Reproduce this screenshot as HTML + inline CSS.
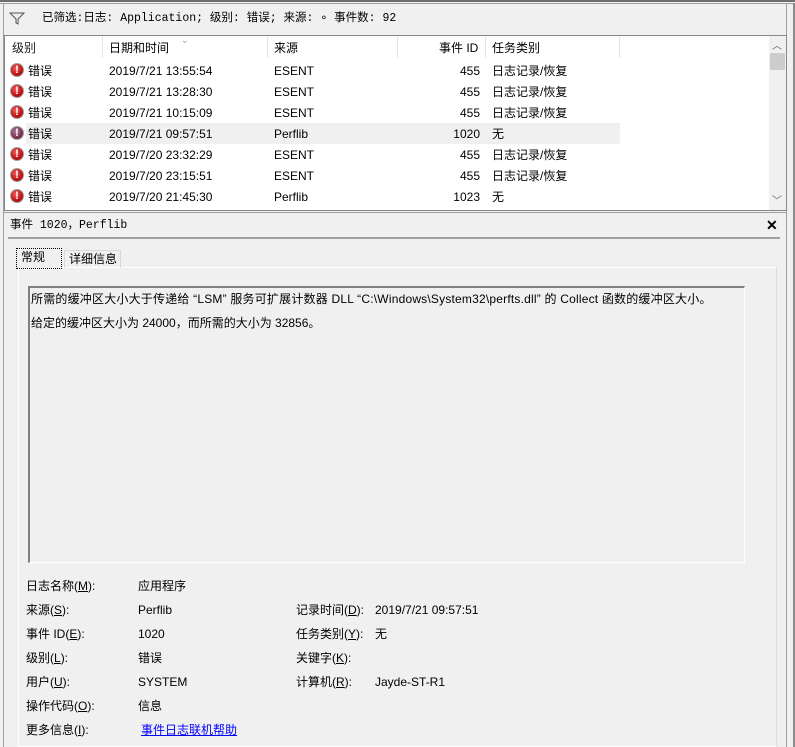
<!DOCTYPE html>
<html><head><meta charset="utf-8"><style>
*{margin:0;padding:0;box-sizing:border-box}
body{width:795px;height:747px;background:#f0f0f0;position:relative;overflow:hidden;font-family:"Liberation Sans","Noto Sans CJK SC",sans-serif;font-size:12px;color:#000;line-height:16px}
.a{position:absolute;white-space:nowrap}
.mono{font-family:"Liberation Mono","Noto Sans CJK SC",monospace;font-size:11px}
.ic{position:absolute;width:14px;height:14px;border-radius:50%;background:radial-gradient(circle at 40% 35%,#f06060,#c01010 60%,#901010);border:1px solid #a0a0a0}
.ic:after{content:"!";position:absolute;left:0;top:-1px;width:12px;text-align:center;color:#fff;font-weight:bold;font-size:11px;line-height:14px}
u{text-decoration:underline}
</style></head><body>
<div class="a" style="left:0;top:0;width:795px;height:2px;background:#6d6d6d"></div>
<div class="a" style="left:0;top:3px;width:795px;height:1px;background:#a0a0a0"></div>
<div class="a" style="left:3px;top:3px;width:1px;height:744px;background:#a0a0a0"></div>
<div class="a" style="left:786px;top:3px;width:1px;height:744px;background:#a0a0a0"></div>
<div class="a" style="left:793px;top:3px;width:2px;height:744px;background:#8a8a8a"></div>
<svg class="a" style="left:9px;top:12px" width="16" height="13" viewBox="0 0 16 13"><path d="M1 1H15L9 7V12L7 11V7Z" fill="none" stroke="#555" stroke-width="1"/></svg>
<div class="a mono" style="left:42px;top:11px;font-size:11.5px">已筛选:日志: Application; 级别: 错误; 来源: ∘ 事件数: 92</div>
<div class="a" style="left:4px;top:35px;width:783px;height:176px;background:#fff;border:1px solid #828790"></div>
<div class="a" style="left:769px;top:36px;width:17px;height:174px;background:#f0f0f0"></div>
<div class="a" style="left:770px;top:53px;width:15px;height:17px;background:#cdcdcd"></div>
<div class="a" style="left:772px;top:39px;color:#606060;font-size:10px">︿</div>
<div class="a" style="left:772px;top:194px;color:#606060;font-size:10px">﹀</div>
<div class="a" style="left:102px;top:36px;width:1px;height:22px;background:#e5e5e5"></div>
<div class="a" style="left:267px;top:36px;width:1px;height:22px;background:#e5e5e5"></div>
<div class="a" style="left:397px;top:36px;width:1px;height:22px;background:#e5e5e5"></div>
<div class="a" style="left:485px;top:36px;width:1px;height:22px;background:#e5e5e5"></div>
<div class="a" style="left:619px;top:36px;width:1px;height:22px;background:#e5e5e5"></div>
<div class="a" style="left:181px;top:32px;color:#999;font-size:9px">⌄</div>
<div class="a" style="left:12px;top:40px;color:#1e1e1e">级别</div>
<div class="a" style="left:109px;top:40px">日期和时间</div>
<div class="a" style="left:274px;top:40px">来源</div>
<div class="a" style="left:439px;top:40px">事件 ID</div>
<div class="a" style="left:492px;top:40px">任务类别</div>
<div class="a" style="left:26px;top:123px;width:594px;height:21px;background:#f0f0f0"></div>
<div class="ic" style="left:10px;top:63px"></div><div class="a" style="left:28px;top:63px">错误</div><div class="a" style="left:109px;top:63px">2019/7/21 13:55:54</div><div class="a" style="left:274px;top:63px">ESENT</div><div class="a" style="left:400px;top:63px;width:80px;text-align:right">455</div><div class="a" style="left:492px;top:63px">日志记录/恢复</div>
<div class="ic" style="left:10px;top:84px"></div><div class="a" style="left:28px;top:84px">错误</div><div class="a" style="left:109px;top:84px">2019/7/21 13:28:30</div><div class="a" style="left:274px;top:84px">ESENT</div><div class="a" style="left:400px;top:84px;width:80px;text-align:right">455</div><div class="a" style="left:492px;top:84px">日志记录/恢复</div>
<div class="ic" style="left:10px;top:105px"></div><div class="a" style="left:28px;top:105px">错误</div><div class="a" style="left:109px;top:105px">2019/7/21 10:15:09</div><div class="a" style="left:274px;top:105px">ESENT</div><div class="a" style="left:400px;top:105px;width:80px;text-align:right">455</div><div class="a" style="left:492px;top:105px">日志记录/恢复</div>
<div class="ic" style="left:10px;top:126px;background:radial-gradient(circle at 40% 35%,#a080a0,#803050 60%,#602040)"></div><div class="a" style="left:28px;top:126px">错误</div><div class="a" style="left:109px;top:126px">2019/7/21 09:57:51</div><div class="a" style="left:274px;top:126px">Perflib</div><div class="a" style="left:400px;top:126px;width:80px;text-align:right">1020</div><div class="a" style="left:492px;top:126px">无</div>
<div class="ic" style="left:10px;top:147px"></div><div class="a" style="left:28px;top:147px">错误</div><div class="a" style="left:109px;top:147px">2019/7/20 23:32:29</div><div class="a" style="left:274px;top:147px">ESENT</div><div class="a" style="left:400px;top:147px;width:80px;text-align:right">455</div><div class="a" style="left:492px;top:147px">日志记录/恢复</div>
<div class="ic" style="left:10px;top:168px"></div><div class="a" style="left:28px;top:168px">错误</div><div class="a" style="left:109px;top:168px">2019/7/20 23:15:51</div><div class="a" style="left:274px;top:168px">ESENT</div><div class="a" style="left:400px;top:168px;width:80px;text-align:right">455</div><div class="a" style="left:492px;top:168px">日志记录/恢复</div>
<div class="ic" style="left:10px;top:189px"></div><div class="a" style="left:28px;top:189px">错误</div><div class="a" style="left:109px;top:189px">2019/7/20 21:45:30</div><div class="a" style="left:274px;top:189px">Perflib</div><div class="a" style="left:400px;top:189px;width:80px;text-align:right">1023</div><div class="a" style="left:492px;top:189px">无</div>
<div class="a" style="left:4px;top:212px;width:783px;height:1px;background:#a0a0a0"></div>
<div class="a mono" style="left:10px;top:218px;font-size:11.5px">事件 1020，Perflib</div>
<div class="a" style="left:766px;top:217px;font-weight:bold;font-size:14px">✕</div>
<div class="a" style="left:8px;top:237px;width:772px;height:2px;background:#a0a0a0"></div>
<div class="a" style="left:18px;top:267px;width:759px;height:480px;background:#f0f0f0;border:1px solid #fff;border-right-color:#dcdcdc"></div>
<div class="a" style="left:16px;top:248px;width:46px;height:21px;border:1px dotted #000;background:#f0f0f0"></div>
<div class="a" style="left:21px;top:249px">常规</div>
<div class="a" style="left:64px;top:250px;width:57px;height:18px;border:1px solid #d9d9d9;border-bottom:none"></div>
<div class="a" style="left:69px;top:251px">详细信息</div>
<div class="a" style="left:28px;top:286px;width:717px;height:277px;border:1px solid #fff;border-left:2px solid #808080;border-top:2px solid #808080;background:#f0f0f0"></div>
<div class="a" style="left:31px;top:291px;letter-spacing:0.2px">所需的缓冲区大小大于传递给 “LSM” 服务可扩展计数器 DLL “C:\Windows\System32\perfts.dll” 的 Collect 函数的缓冲区大小。</div>
<div class="a" style="left:31px;top:315px">给定的缓冲区大小为 24000，而所需的大小为 32856。</div>
<div class="a" style="left:26px;top:578px">日志名称(<u>M</u>):</div><div class="a" style="left:138px;top:578px">应用程序</div>
<div class="a" style="left:26px;top:602px">来源(<u>S</u>):</div><div class="a" style="left:138px;top:602px">Perflib</div>
<div class="a" style="left:296px;top:602px">记录时间(<u>D</u>):</div><div class="a" style="left:375px;top:602px">2019/7/21 09:57:51</div>
<div class="a" style="left:26px;top:626px">事件 ID(<u>E</u>):</div><div class="a" style="left:138px;top:626px">1020</div>
<div class="a" style="left:296px;top:626px">任务类别(<u>Y</u>):</div><div class="a" style="left:375px;top:626px">无</div>
<div class="a" style="left:26px;top:650px">级别(<u>L</u>):</div><div class="a" style="left:138px;top:650px">错误</div>
<div class="a" style="left:296px;top:650px">关键字(<u>K</u>):</div>
<div class="a" style="left:26px;top:674px">用户(<u>U</u>):</div><div class="a" style="left:138px;top:674px">SYSTEM</div>
<div class="a" style="left:296px;top:674px">计算机(<u>R</u>):</div><div class="a" style="left:375px;top:674px">Jayde-ST-R1</div>
<div class="a" style="left:26px;top:698px">操作代码(<u>O</u>):</div><div class="a" style="left:138px;top:698px">信息</div>
<div class="a" style="left:26px;top:722px">更多信息(<u>I</u>):</div><div class="a" style="left:141px;top:722px;color:#0000ff;text-decoration:underline">事件日志联机帮助</div>
</body></html>
